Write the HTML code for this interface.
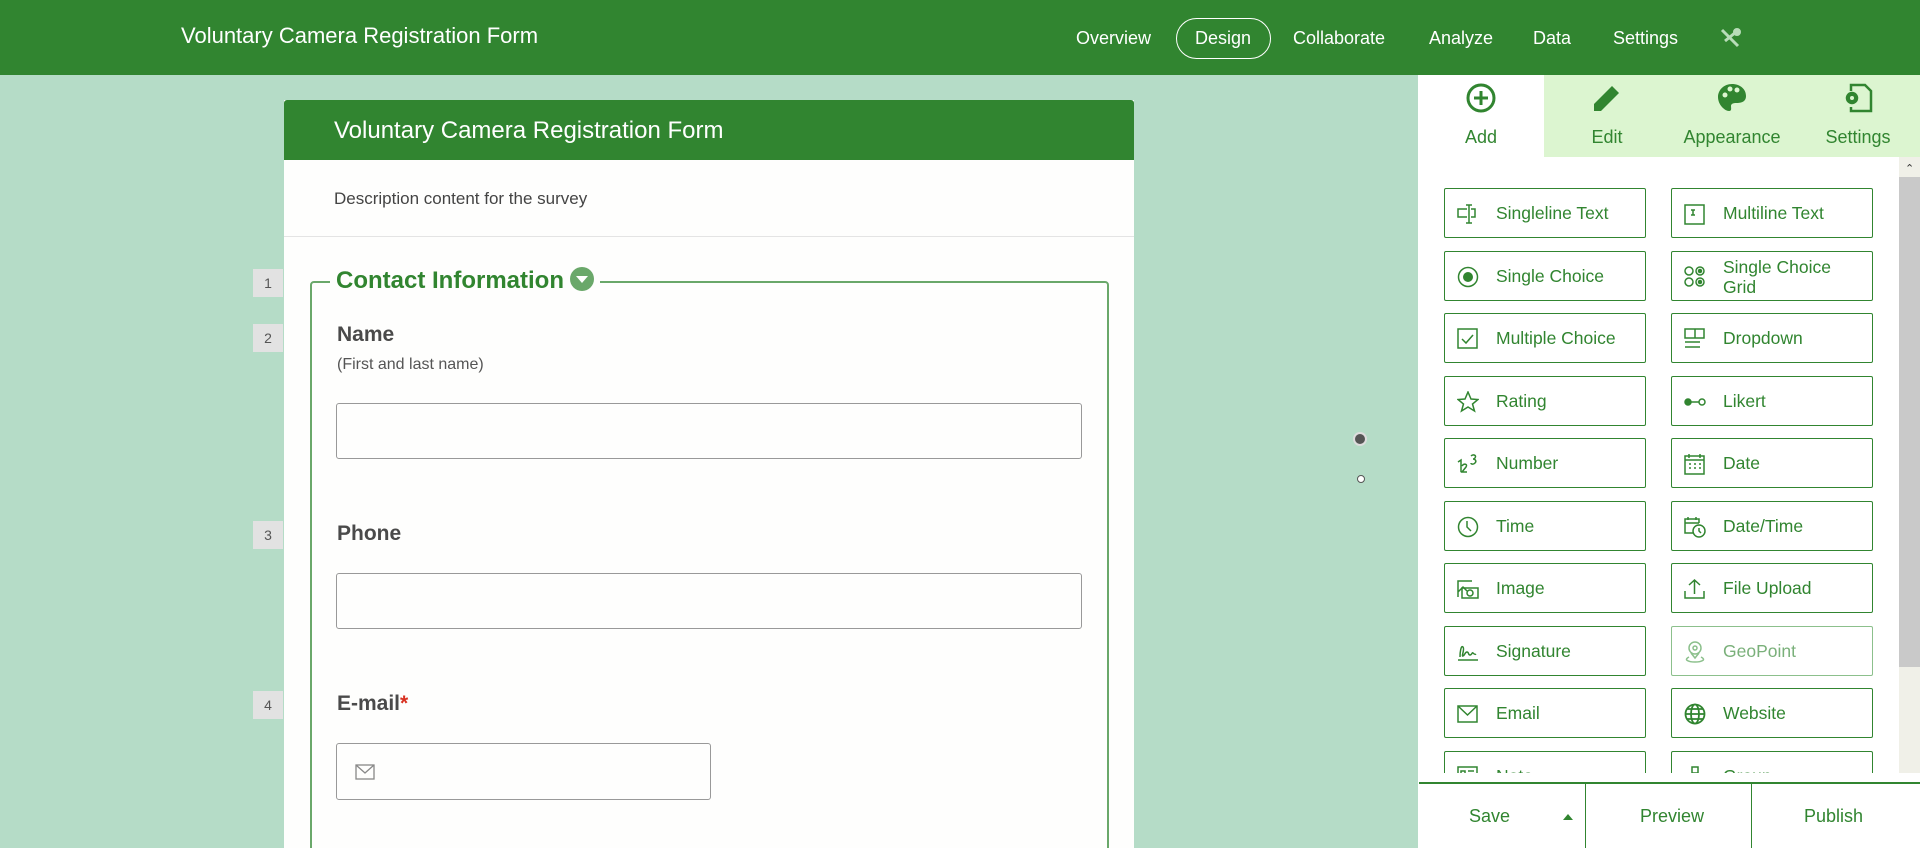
<!DOCTYPE html>
<html><head><meta charset="utf-8"><style>
*{box-sizing:border-box;margin:0;padding:0}
html{width:1920px;height:848px;overflow:hidden}
body{width:1920px;height:848px;overflow:hidden;background:#b5dcc7;font-family:"Liberation Sans",sans-serif;position:relative}
.top{position:absolute;left:0;top:0;width:1920px;height:75px;background:#318530;color:#fff}
.top .t{position:absolute;left:181px;top:23px;font-size:22px}
.nav{position:absolute;top:28px;font-size:18px}
.pill{position:absolute;left:1176px;top:18px;width:95px;height:41px;border:1px solid #fff;border-radius:21px}
.card{position:absolute;left:284px;top:100px;width:850px;height:748px;background:#fefefd}
.ch{height:60px;background:#318530;border-radius:3px 3px 0 0;color:#fff;font-size:24px;padding:17px 0 0 50px}
.desc{position:absolute;left:50px;top:89px;font-size:17px;color:#444}
.sep{position:absolute;left:0;top:136px;width:850px;height:1px;background:#e4e4e4}
.box{position:absolute;left:310px;top:281px;width:799px;height:580px;border:2px solid #6aa86a;border-radius:4px}
.sec{position:absolute;left:330px;top:265px;background:#fefefd;padding:0 6px;font-size:24px;font-weight:bold;color:#318530;height:32px;line-height:32px}
.sec .dd{display:inline-block;width:24px;height:24px;border-radius:50%;background:#6aa86a;vertical-align:-3px;margin-left:6px;position:relative}
.sec .dd:after{content:"";position:absolute;left:6px;top:9px;border-left:6px solid transparent;border-right:6px solid transparent;border-top:7px solid #fff}
.badge{position:absolute;left:253px;width:30px;height:28px;background:#e2e2e2;color:#555;font-size:14px;text-align:center;line-height:28px}
.lbl{position:absolute;left:337px;font-size:21px;font-weight:bold;color:#4a4a4a}
.sub{position:absolute;left:337px;top:356px;font-size:16px;color:#555}
.inp{position:absolute;left:336px;border:1px solid #999;border-radius:3px;background:#fefefd}
.panel{position:absolute;left:1418px;top:75px;width:502px;height:773px;background:#fff}
.tab{position:absolute;top:0;height:82px;width:126px;background:#dcf5d0;color:#318530;text-align:center;font-size:18px}
.tab svg{position:absolute;left:48px;top:8px}
.tab span{position:absolute;left:0;right:0;top:52px}
.sb{position:absolute;left:1899px;top:157px;width:21px;height:616px;background:#f0f0e8}
.sb .th{position:absolute;left:0;top:20px;width:21px;height:490px;background:#c9c9c9}
.btn{position:absolute;width:202px;height:50px;border:1.5px solid #318530;border-radius:2px;color:#318530;font-size:17.5px;background:#fff}
.btn span{position:absolute;left:51px;top:14px;line-height:20px}
.btn svg{position:absolute;left:12px;top:14px}
.bot{position:absolute;left:1419px;top:782px;width:501px;height:66px;border-top:2px solid #318530;background:#fff;color:#318530;font-size:18px}
.bot div{position:absolute;top:22px}
</style></head><body>
<div class="top">
<div class="t">Voluntary Camera Registration Form</div>
<div class="pill"></div>
<div class="nav" style="left:1076px">Overview</div>
<div class="nav" style="left:1195px">Design</div>
<div class="nav" style="left:1293px">Collaborate</div>
<div class="nav" style="left:1429px">Analyze</div>
<div class="nav" style="left:1533px">Data</div>
<div class="nav" style="left:1613px">Settings</div>
<svg style="position:absolute;left:1719px;top:27px" width="22" height="22" viewBox="0 0 22 22" fill="none" stroke="#b8dcb8" stroke-width="3"><path d="M3 3 L19 19 M6 14 L17 5"/><circle cx="18" cy="5" r="2.5" fill="#b8dcb8"/></svg>
</div>

<div class="card">
<div class="ch">Voluntary Camera Registration Form</div>
<div class="desc">Description content for the survey</div>
<div class="sep"></div>
</div>
<div class="box"></div>
<div class="sec">Contact Information<span class="dd"></span></div>
<div class="badge" style="top:269px">1</div>
<div class="badge" style="top:324px">2</div>
<div class="badge" style="top:521px">3</div>
<div class="badge" style="top:691px">4</div>
<div class="lbl" style="top:323px">Name</div>
<div class="sub">(First and last name)</div>
<div class="inp" style="top:403px;width:746px;height:56px"></div>
<div class="lbl" style="top:522px">Phone</div>
<div class="inp" style="top:573px;width:746px;height:56px"></div>
<div class="lbl" style="top:692px">E-mail<span style="color:#d83020">*</span></div>
<div class="inp" style="top:743px;width:375px;height:57px"><svg style="position:absolute;left:18px;top:20px" width="20" height="16" viewBox="0 0 20 16" fill="none" stroke="#888" stroke-width="1.3"><rect x="1" y="1" width="18" height="14"/><path d="M1 1 L10 9 L19 1"/></svg></div>

<div style="position:absolute;left:1353px;top:432px;width:14px;height:14px;border-radius:50%;background:#555;border:2px solid #ddd"></div>
<div style="position:absolute;left:1357px;top:475px;width:8px;height:8px;border-radius:50%;background:#fff;border:1px solid #555"></div>

<div class="panel">
<div class="tab" style="left:0;background:#fff"><svg width="30" height="30" viewBox="0 0 30 30" fill="none" stroke="#318530" stroke-width="3"><circle cx="15" cy="15" r="13"/><path d="M15 8v14M8 15h14"/></svg><span>Add</span></div>
<div class="tab" style="left:126px"><svg width="30" height="30" viewBox="0 0 30 30"><path d="M2 28 L2 21 L20 3 L27 10 L9 28Z" fill="#318530"/></svg><span>Edit</span></div>
<div class="tab" style="left:251px"><svg width="30" height="30" viewBox="0 0 30 30"><path d="M15 1C7 1 1 7 1 14c0 8 7 14 11 14 3 0 2-3 2-5s2-3 5-3c5 0 10-1 10-7C29 6 23 1 15 1Z" fill="#318530"/><circle cx="8" cy="12" r="2.5" fill="#dcf5d0"/><circle cx="13" cy="6" r="2.5" fill="#dcf5d0"/><circle cx="20" cy="7" r="2.5" fill="#dcf5d0"/></svg><span>Appearance</span></div>
<div class="tab" style="left:377px"><svg width="30" height="30" viewBox="0 0 30 30" fill="none" stroke="#318530" stroke-width="2.5"><path d="M8 8V2h14l6 6v20H8v-4"/><circle cx="9" cy="15" r="5" fill="#318530"/><circle cx="9" cy="15" r="2" fill="#dcf5d0" stroke="none"/></svg><span>Settings</span></div>
</div>
<div class="sb"><div class="th"></div><div style="position:absolute;left:6px;top:5px;color:#333;font-size:11px">&#8963;</div></div>

<div style="position:absolute;left:1419px;top:157px;width:480px;height:616px;overflow:hidden">
<div style="position:relative;left:-1419px;top:-157px">
<div class="btn" style="left:1444px;top:188px"><svg width="22" height="22" viewBox="0 0 22 22" fill="none" stroke="#318530" stroke-width="1.5"><path d="M10 6H1v8h9M14 6h4v8h-4M12 2v18M9 2h6M9 20h6"/></svg><span>Singleline Text</span></div>
<div class="btn" style="left:1671px;top:188px"><svg width="22" height="22" viewBox="0 0 22 22" fill="none" stroke="#318530" stroke-width="1.5"><rect x="1" y="2" width="19" height="19"/><path d="M7 7h4M9 7v5M7 12h4"/></svg><span>Multiline Text</span></div>
<div class="btn" style="left:1444px;top:251px"><svg width="22" height="22" viewBox="0 0 22 22"><circle cx="11" cy="11" r="9.5" fill="none" stroke="#318530" stroke-width="1.5"/><circle cx="11" cy="11" r="5" fill="#318530"/></svg><span>Single Choice</span></div>
<div class="btn" style="left:1671px;top:251px"><svg width="22" height="22" viewBox="0 0 22 22" fill="none" stroke="#318530" stroke-width="1.5"><circle cx="5" cy="5" r="4"/><circle cx="16" cy="5" r="4"/><circle cx="5" cy="16" r="4"/><circle cx="16" cy="16" r="4"/><circle cx="16" cy="5" r="1.5" fill="#318530"/><circle cx="16" cy="16" r="1.5" fill="#318530"/></svg><span style="top:5px">Single Choice<br>Grid</span></div>
<div class="btn" style="left:1444px;top:313px"><svg width="22" height="22" viewBox="0 0 22 22" fill="none" stroke="#318530" stroke-width="1.5"><rect x="1" y="1" width="19" height="19"/><path d="M5 11l4 4 7-8"/></svg><span>Multiple Choice</span></div>
<div class="btn" style="left:1671px;top:313px"><svg width="22" height="22" viewBox="0 0 22 22" fill="none" stroke="#318530" stroke-width="1.5"><rect x="1" y="1" width="19" height="9"/><path d="M11 1v9M1 14h15M1 19h15"/></svg><span>Dropdown</span></div>
<div class="btn" style="left:1444px;top:376px"><svg width="22" height="22" viewBox="0 0 22 22" fill="none" stroke="#318530" stroke-width="1.5"><path d="M11 1l3 7 7 .5-5.5 4.5 2 7-6.5-4-6.5 4 2-7L1 8.5 8 8z"/></svg><span>Rating</span></div>
<div class="btn" style="left:1671px;top:376px"><svg width="22" height="22" viewBox="0 0 22 22" stroke="#318530" stroke-width="1.5"><circle cx="4" cy="11" r="3" fill="#318530"/><path d="M7 11h8"/><circle cx="18" cy="11" r="3" fill="none"/></svg><span>Likert</span></div>
<div class="btn" style="left:1444px;top:438px"><svg width="24" height="22" viewBox="0 0 24 22" fill="none" stroke="#318530" stroke-width="1.5"><path d="M1 9l3-2v12M5 13c2-3 6-2 4 1l-4 5h5M14 3c2-2 6-1 4 2-1 1-2 1-2 1 2 0 4 2 2 4-2 2-4 1-4 0"/></svg><span>Number</span></div>
<div class="btn" style="left:1671px;top:438px"><svg width="22" height="22" viewBox="0 0 22 22" fill="none" stroke="#318530" stroke-width="1.5"><rect x="1" y="3" width="19" height="18"/><path d="M1 7h19M5 1v4M16 1v4M5 11h2M10 11h2M15 11h2M5 15h2M10 15h2M15 15h2"/></svg><span>Date</span></div>
<div class="btn" style="left:1444px;top:501px"><svg width="22" height="22" viewBox="0 0 22 22" fill="none" stroke="#318530" stroke-width="1.5"><circle cx="11" cy="11" r="9.5"/><path d="M10 5v6l4 4"/></svg><span>Time</span></div>
<div class="btn" style="left:1671px;top:501px"><svg width="22" height="22" viewBox="0 0 22 22" fill="none" stroke="#318530" stroke-width="1.5"><path d="M9 17H1V3h14v4M1 7h14M4 1v3M12 1v3"/><circle cx="15" cy="15" r="6"/><path d="M15 12v3l2 2"/></svg><span>Date/Time</span></div>
<div class="btn" style="left:1444px;top:563px"><svg width="22" height="22" viewBox="0 0 22 22" fill="none" stroke="#318530" stroke-width="1.5"><path d="M1 19V3h14M1 14l5-5 4 4"/><rect x="5" y="10" width="16" height="10"/><circle cx="13" cy="15" r="3"/></svg><span>Image</span></div>
<div class="btn" style="left:1671px;top:563px"><svg width="22" height="22" viewBox="0 0 22 22" fill="none" stroke="#318530" stroke-width="1.5"><path d="M1 13v7h19v-7M10.5 16V2M5 7l5.5-5 5.5 5"/></svg><span>File Upload</span></div>
<div class="btn" style="left:1444px;top:626px"><svg width="22" height="22" viewBox="0 0 22 22" fill="none" stroke="#318530" stroke-width="1.5"><path d="M1 19h20M3 16c0-5 1-12 3-10s-2 10 0 9 2-4 4-4 1 3 3 3 2-3 3-2 2 2 3 1"/></svg><span>Signature</span></div>
<div class="btn" style="left:1671px;top:626px;border-color:#8cc08c;color:#7ab07a"><svg width="22" height="22" viewBox="0 0 22 22" fill="none" stroke="#8cc08c" stroke-width="1.5"><circle cx="11" cy="7" r="6"/><circle cx="11" cy="7" r="2"/><path d="M7 12l4 5 4-5M5 16c-6 3 0 5 6 5s12-2 6-5"/></svg><span>GeoPoint</span></div>
<div class="btn" style="left:1444px;top:688px"><svg width="22" height="22" viewBox="0 0 22 22" fill="none" stroke="#318530" stroke-width="1.5"><rect x="1" y="3" width="19" height="16"/><path d="M1 3l9.5 9L20 3"/></svg><span>Email</span></div>
<div class="btn" style="left:1671px;top:688px"><svg width="22" height="22" viewBox="0 0 22 22" fill="none" stroke="#318530" stroke-width="1.8"><circle cx="11" cy="11" r="9.5"/><ellipse cx="11" cy="11" rx="4" ry="9.5"/><path d="M1.5 11h19M3 6h16M3 16h16"/></svg><span>Website</span></div>
<div class="btn" style="left:1444px;top:751px"><svg width="22" height="22" viewBox="0 0 22 22" fill="none" stroke="#318530" stroke-width="1.5"><rect x="1" y="1" width="19" height="15"/><path d="M4 5h4v4H4zM11 5h6M11 9h6M4 12h13"/></svg><span>Note</span></div>
<div class="btn" style="left:1671px;top:751px"><svg width="22" height="22" viewBox="0 0 22 22" fill="none" stroke="#318530" stroke-width="1.5"><rect x="8" y="1" width="6" height="6"/></svg><span>Group</span></div>
</div></div>

<div class="bot">
<div style="left:50px">Save</div>
<div style="left:144px;top:30px;border-left:5px solid transparent;border-right:5px solid transparent;border-bottom:6px solid #318530;width:0;height:0"></div>
<div style="left:166px;top:0;width:1px;height:66px;background:#318530"></div>
<div style="left:221px">Preview</div>
<div style="left:332px;top:0;width:1px;height:66px;background:#318530"></div>
<div style="left:385px">Publish</div>
</div>
</body></html>
